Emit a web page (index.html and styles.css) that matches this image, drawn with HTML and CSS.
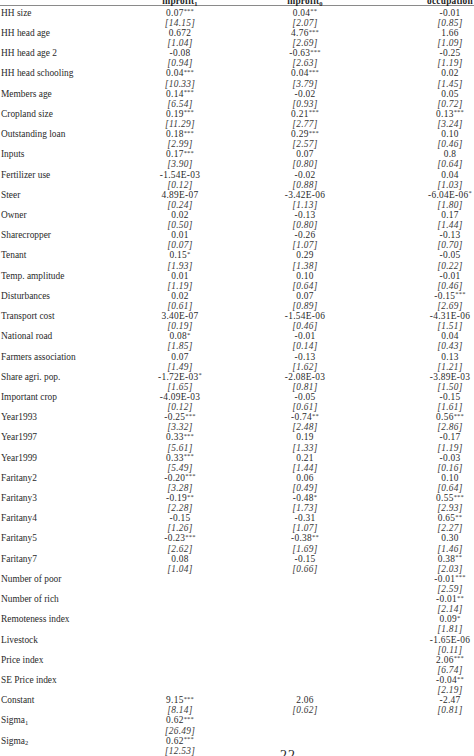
FILE: index.html
```html
<!DOCTYPE html>
<html>
<head>
<meta charset="utf-8">
<link rel="stylesheet" href="styles.css">
</head>
<body>
<div class="tbl">
<div class="row head"><span class="lab"></span><span class="c">lnprofit<sub>1</sub></span><span class="c">lnprofit<sub>0</sub></span><span class="c">occupation</span></div>
<div class="rows">
<div class="row"><span class="lab">HH size</span><span class="c">0.07<sup>***</sup></span><span class="c">0.04<sup>**</sup></span><span class="c">-0.01</span></div>
<div class="row se"><span class="lab"></span><span class="c">[14.15]</span><span class="c">[2.07]</span><span class="c">[0.85]</span></div>
<div class="row"><span class="lab">HH head age</span><span class="c">0.672</span><span class="c">4.76<sup>***</sup></span><span class="c">1.66</span></div>
<div class="row se"><span class="lab"></span><span class="c">[1.04]</span><span class="c">[2.69]</span><span class="c">[1.09]</span></div>
<div class="row"><span class="lab">HH head age 2</span><span class="c">-0.08</span><span class="c">-0.63<sup>***</sup></span><span class="c">-0.25</span></div>
<div class="row se"><span class="lab"></span><span class="c">[0.94]</span><span class="c">[2.63]</span><span class="c">[1.19]</span></div>
<div class="row"><span class="lab">HH head schooling</span><span class="c">0.04<sup>***</sup></span><span class="c">0.04<sup>***</sup></span><span class="c">0.02</span></div>
<div class="row se"><span class="lab"></span><span class="c">[10.33]</span><span class="c">[3.79]</span><span class="c">[1.45]</span></div>
<div class="row"><span class="lab">Members age</span><span class="c">0.14<sup>***</sup></span><span class="c">-0.02</span><span class="c">0.05</span></div>
<div class="row se"><span class="lab"></span><span class="c">[6.54]</span><span class="c">[0.93]</span><span class="c">[0.72]</span></div>
<div class="row"><span class="lab">Cropland size</span><span class="c">0.19<sup>***</sup></span><span class="c">0.21<sup>***</sup></span><span class="c">0.13<sup>***</sup></span></div>
<div class="row se"><span class="lab"></span><span class="c">[11.29]</span><span class="c">[2.77]</span><span class="c">[3.24]</span></div>
<div class="row"><span class="lab">Outstanding loan</span><span class="c">0.18<sup>***</sup></span><span class="c">0.29<sup>***</sup></span><span class="c">0.10</span></div>
<div class="row se"><span class="lab"></span><span class="c">[2.99]</span><span class="c">[2.57]</span><span class="c">[0.46]</span></div>
<div class="row"><span class="lab">Inputs</span><span class="c">0.17<sup>***</sup></span><span class="c">0.07</span><span class="c">0.8</span></div>
<div class="row se"><span class="lab"></span><span class="c">[3.90]</span><span class="c">[0.80]</span><span class="c">[0.64]</span></div>
<div class="row"><span class="lab">Fertilizer use</span><span class="c">-1.54E-03</span><span class="c">-0.02</span><span class="c">0.04</span></div>
<div class="row se"><span class="lab"></span><span class="c">[0.12]</span><span class="c">[0.88]</span><span class="c">[1.03]</span></div>
<div class="row"><span class="lab">Steer</span><span class="c">4.89E-07</span><span class="c">-3.42E-06</span><span class="c">-6.04E-06<sup>*</sup></span></div>
<div class="row se"><span class="lab"></span><span class="c">[0.24]</span><span class="c">[1.13]</span><span class="c">[1.80]</span></div>
<div class="row"><span class="lab">Owner</span><span class="c">0.02</span><span class="c">-0.13</span><span class="c">0.17</span></div>
<div class="row se"><span class="lab"></span><span class="c">[0.50]</span><span class="c">[0.80]</span><span class="c">[1.44]</span></div>
<div class="row"><span class="lab">Sharecropper</span><span class="c">0.01</span><span class="c">-0.26</span><span class="c">-0.13</span></div>
<div class="row se"><span class="lab"></span><span class="c">[0.07]</span><span class="c">[1.07]</span><span class="c">[0.70]</span></div>
<div class="row"><span class="lab">Tenant</span><span class="c">0.15<sup>*</sup></span><span class="c">0.29</span><span class="c">-0.05</span></div>
<div class="row se"><span class="lab"></span><span class="c">[1.93]</span><span class="c">[1.38]</span><span class="c">[0.22]</span></div>
<div class="row"><span class="lab">Temp. amplitude</span><span class="c">0.01</span><span class="c">0.10</span><span class="c">-0.01</span></div>
<div class="row se"><span class="lab"></span><span class="c">[1.19]</span><span class="c">[0.64]</span><span class="c">[0.46]</span></div>
<div class="row"><span class="lab">Disturbances</span><span class="c">0.02</span><span class="c">0.07</span><span class="c">-0.15<sup>***</sup></span></div>
<div class="row se"><span class="lab"></span><span class="c">[0.61]</span><span class="c">[0.89]</span><span class="c">[2.69]</span></div>
<div class="row"><span class="lab">Transport cost</span><span class="c">3.40E-07</span><span class="c">-1.54E-06</span><span class="c">-4.31E-06</span></div>
<div class="row se"><span class="lab"></span><span class="c">[0.19]</span><span class="c">[0.46]</span><span class="c">[1.51]</span></div>
<div class="row"><span class="lab">National road</span><span class="c">0.08<sup>*</sup></span><span class="c">-0.01</span><span class="c">0.04</span></div>
<div class="row se"><span class="lab"></span><span class="c">[1.85]</span><span class="c">[0.14]</span><span class="c">[0.43]</span></div>
<div class="row"><span class="lab">Farmers association</span><span class="c">0.07</span><span class="c">-0.13</span><span class="c">0.13</span></div>
<div class="row se"><span class="lab"></span><span class="c">[1.49]</span><span class="c">[1.62]</span><span class="c">[1.21]</span></div>
<div class="row"><span class="lab">Share agri. pop.</span><span class="c">-1.72E-03<sup>*</sup></span><span class="c">-2.08E-03</span><span class="c">-3.89E-03</span></div>
<div class="row se"><span class="lab"></span><span class="c">[1.65]</span><span class="c">[0.81]</span><span class="c">[1.50]</span></div>
<div class="row"><span class="lab">Important crop</span><span class="c">-4.09E-03</span><span class="c">-0.05</span><span class="c">-0.15</span></div>
<div class="row se"><span class="lab"></span><span class="c">[0.12]</span><span class="c">[0.61]</span><span class="c">[1.61]</span></div>
<div class="row"><span class="lab">Year1993</span><span class="c">-0.25<sup>***</sup></span><span class="c">-0.74<sup>**</sup></span><span class="c">0.56<sup>***</sup></span></div>
<div class="row se"><span class="lab"></span><span class="c">[3.32]</span><span class="c">[2.48]</span><span class="c">[2.86]</span></div>
<div class="row"><span class="lab">Year1997</span><span class="c">0.33<sup>***</sup></span><span class="c">0.19</span><span class="c">-0.17</span></div>
<div class="row se"><span class="lab"></span><span class="c">[5.61]</span><span class="c">[1.33]</span><span class="c">[1.19]</span></div>
<div class="row"><span class="lab">Year1999</span><span class="c">0.33<sup>***</sup></span><span class="c">0.21</span><span class="c">-0.03</span></div>
<div class="row se"><span class="lab"></span><span class="c">[5.49]</span><span class="c">[1.44]</span><span class="c">[0.16]</span></div>
<div class="row"><span class="lab">Faritany2</span><span class="c">-0.20<sup>***</sup></span><span class="c">0.06</span><span class="c">0.10</span></div>
<div class="row se"><span class="lab"></span><span class="c">[3.28]</span><span class="c">[0.49]</span><span class="c">[0.64]</span></div>
<div class="row"><span class="lab">Faritany3</span><span class="c">-0.19<sup>**</sup></span><span class="c">-0.48<sup>*</sup></span><span class="c">0.55<sup>***</sup></span></div>
<div class="row se"><span class="lab"></span><span class="c">[2.28]</span><span class="c">[1.73]</span><span class="c">[2.93]</span></div>
<div class="row"><span class="lab">Faritany4</span><span class="c">-0.15</span><span class="c">-0.31</span><span class="c">0.65<sup>**</sup></span></div>
<div class="row se"><span class="lab"></span><span class="c">[1.26]</span><span class="c">[1.07]</span><span class="c">[2.27]</span></div>
<div class="row"><span class="lab">Faritany5</span><span class="c">-0.23<sup>***</sup></span><span class="c">-0.38<sup>**</sup></span><span class="c">0.30</span></div>
<div class="row se"><span class="lab"></span><span class="c">[2.62]</span><span class="c">[1.69]</span><span class="c">[1.46]</span></div>
<div class="row"><span class="lab">Faritany7</span><span class="c">0.08</span><span class="c">-0.15</span><span class="c">0.38<sup>**</sup></span></div>
<div class="row se"><span class="lab"></span><span class="c">[1.04]</span><span class="c">[0.66]</span><span class="c">[2.03]</span></div>
<div class="row"><span class="lab">Number of poor</span><span class="c"></span><span class="c"></span><span class="c">-0.01<sup>***</sup></span></div>
<div class="row se"><span class="lab"></span><span class="c"></span><span class="c"></span><span class="c">[2.59]</span></div>
<div class="row"><span class="lab">Number of rich</span><span class="c"></span><span class="c"></span><span class="c">-0.01<sup>**</sup></span></div>
<div class="row se"><span class="lab"></span><span class="c"></span><span class="c"></span><span class="c">[2.14]</span></div>
<div class="row"><span class="lab">Remoteness index</span><span class="c"></span><span class="c"></span><span class="c">0.09<sup>*</sup></span></div>
<div class="row se"><span class="lab"></span><span class="c"></span><span class="c"></span><span class="c">[1.81]</span></div>
<div class="row"><span class="lab">Livestock</span><span class="c"></span><span class="c"></span><span class="c">-1.65E-06</span></div>
<div class="row se"><span class="lab"></span><span class="c"></span><span class="c"></span><span class="c">[0.11]</span></div>
<div class="row"><span class="lab">Price index</span><span class="c"></span><span class="c"></span><span class="c">2.06<sup>***</sup></span></div>
<div class="row se"><span class="lab"></span><span class="c"></span><span class="c"></span><span class="c">[6.74]</span></div>
<div class="row"><span class="lab">SE Price index</span><span class="c"></span><span class="c"></span><span class="c">-0.04<sup>**</sup></span></div>
<div class="row se"><span class="lab"></span><span class="c"></span><span class="c"></span><span class="c">[2.19]</span></div>
<div class="row"><span class="lab">Constant</span><span class="c">9.15<sup>***</sup></span><span class="c">2.06</span><span class="c">-2.47</span></div>
<div class="row se"><span class="lab"></span><span class="c">[8.14]</span><span class="c">[0.62]</span><span class="c">[0.81]</span></div>
<div class="row"><span class="lab">Sigma<sub>1</sub></span><span class="c">0.62<sup>***</sup></span><span class="c"></span><span class="c"></span></div>
<div class="row se"><span class="lab"></span><span class="c">[26.49]</span><span class="c"></span><span class="c"></span></div>
<div class="row"><span class="lab">Sigma<sub>2</sub></span><span class="c">0.62<sup>***</sup></span><span class="c"></span><span class="c"></span></div>
<div class="row se"><span class="lab"></span><span class="c">[12.53]</span><span class="c"></span><span class="c"></span></div>
</div>
<div class="pageno">22</div>
</div>
</body>
</html>
```

FILE: styles.css
```css
html, body {
  margin: 0;
  padding: 0;
  overflow: hidden;
  background: #ffffff;
}
body {
  width: 474px;
  height: 756px;
  font-family: "Liberation Serif", "Times New Roman", serif;
  font-size: 9.4px;
  color: #2a2a2a;
}
.tbl {
  width: 530px;
}
.row {
  display: grid;
  grid-template-columns: 120px 120px 130px 160px;
  height: 10.11px;
  line-height: 10.11px;
  white-space: nowrap;
}
.head {
  height: 7px;
  line-height: 7.8px;
  margin-top: -2px;
  font-weight: bold;
  border-bottom: 1px solid #8a8a8a;
  color: #1e1e1e;
}
.head .c {
  letter-spacing: 0.2px;
}
.rows {
  padding-top: 1.8px;
}
.lab {
  padding-left: 1px;
}
.c {
  text-align: center;
  letter-spacing: 0.3px;
}
.se .c {
  font-style: italic;
  color: #3a3a3a;
}
sup {
  font-size: 6.5px;
  vertical-align: 0;
  position: relative;
  top: -2.5px;
  line-height: 0;
  letter-spacing: 0.2px;
}
sub {
  font-size: 6.5px;
  vertical-align: 0;
  position: relative;
  top: 1.5px;
  line-height: 0;
}
.pageno {
  margin-top: -7px;
  padding-left: 280px;
  font-size: 14px;
  line-height: 14px;
  letter-spacing: 1px;
}
```
